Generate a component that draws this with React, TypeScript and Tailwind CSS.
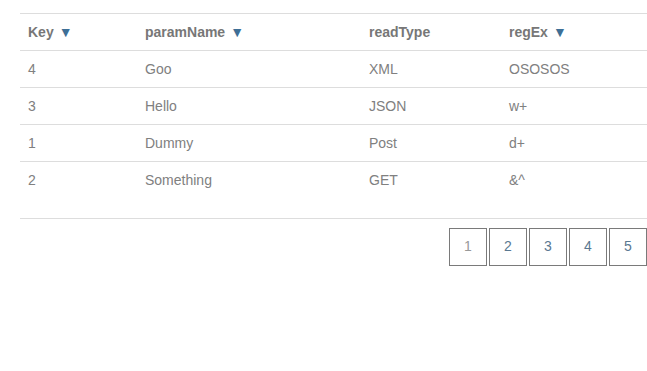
const columns = [
  { label: "Key", sortable: true, width: "w-[117px]" },
  { label: "paramName", sortable: true, width: "w-[224px]" },
  { label: "readType", sortable: false, width: "w-[140px]" },
  { label: "regEx", sortable: true, width: "" },
];

const rows = [
  ["4", "Goo", "XML", "OSOSOS"],
  ["3", "Hello", "JSON", "w+"],
  ["1", "Dummy", "Post", "d+"],
  ["2", "Something", "GET", "&^"],
];

const pages = [1, 2, 3, 4, 5];

export default function App() {
  return (
    <div className="min-h-[371px] w-[647px] bg-white pl-5 pt-[13px] font-['Liberation_Sans',Arial,sans-serif] text-[14px]">
      <table className="w-full border-collapse border-t border-[#ddd] text-left">
        <thead>
          <tr className="h-[37px] border-b border-[#ddd]">
            {columns.map((col) => (
              <th key={col.label} className={`${col.width} px-2 align-middle font-bold text-[#777]`}>
                {col.label}
                {col.sortable && <span className="ml-[5px] text-[14px] text-[#3e6f96]">▼</span>}
              </th>
            ))}
          </tr>
        </thead>
        <tbody>
          {rows.map((row, i) => (
            <tr key={row[0]} className={i < rows.length - 1 ? "h-[37px] border-b border-[#ddd]" : "h-[37px]"}>
              {row.map((cell, j) => (
                <td key={j} className="px-2 align-middle text-[#808080]">
                  {cell}
                </td>
              ))}
            </tr>
          ))}
        </tbody>
      </table>

      <div className="mt-[19px] border-t border-[#ddd] pt-[9px]">
        <div className="flex justify-end gap-[2px]">
          {pages.map((p) => (
            <button
              key={p}
              className={`flex h-[38px] w-[38px] items-center justify-center border border-[#7a7a7a] bg-white text-[14px] ${
                p === 1 ? "text-[#999]" : "text-[#5a7891]"
              }`}
            >
              {p}
            </button>
          ))}
        </div>
      </div>
    </div>
  );
}
